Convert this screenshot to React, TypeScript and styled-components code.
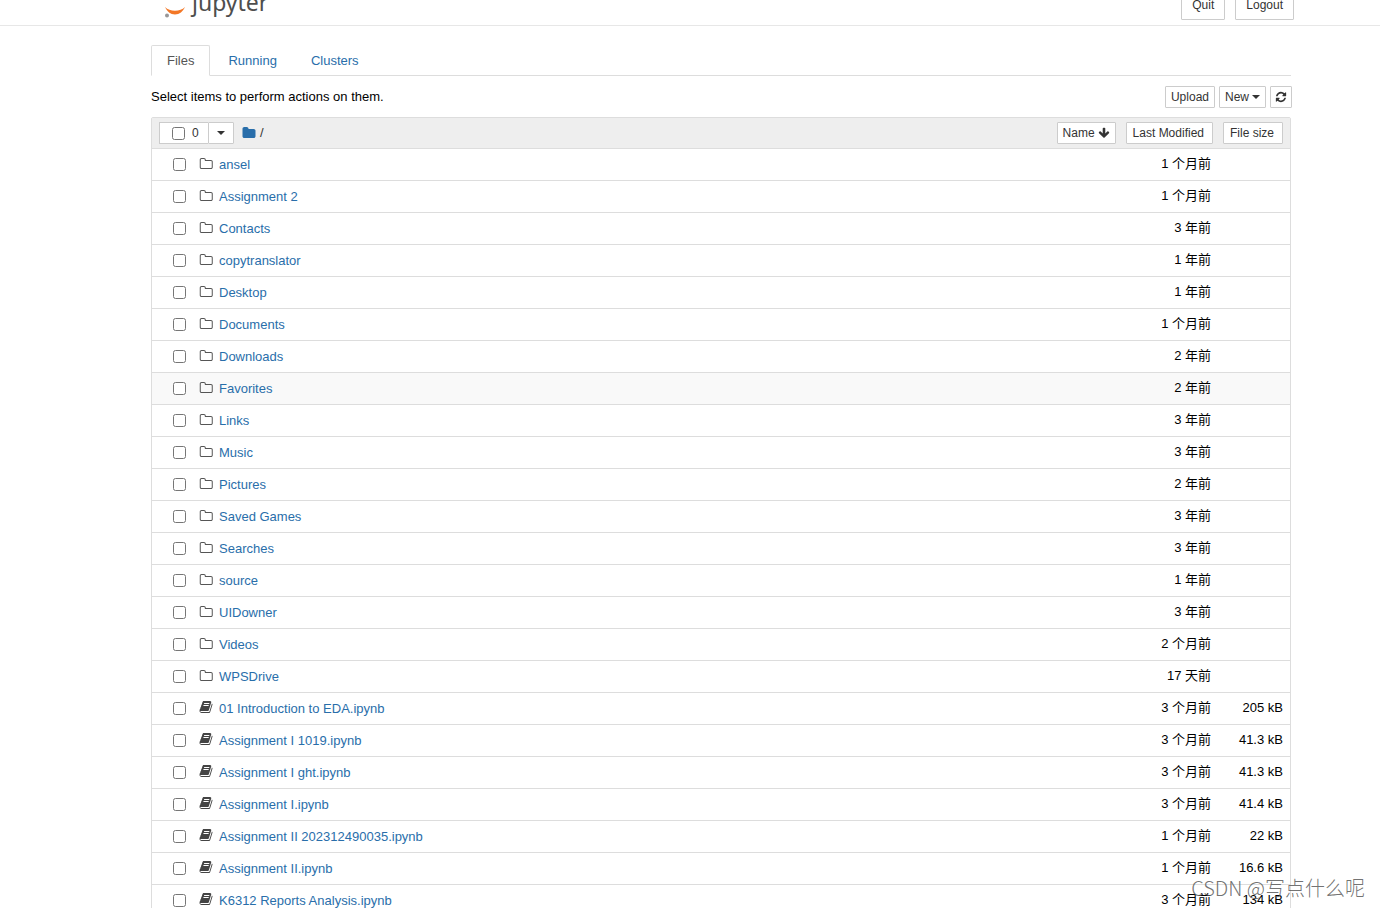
import React from "react";
import styled, { createGlobalStyle } from "styled-components";

const GlobalStyle = createGlobalStyle`
  *, *::before, *::after { box-sizing: border-box; }
  body {
    margin: 0;
    background: #fff;
    color: #000;
    font-family: "Liberation Sans", Arial, "Noto Sans CJK SC", sans-serif;
    font-size: 13px;
    line-height: 20px;
  }
  button, input { font-family: inherit; }
`;

const Page = styled.div`
  position: relative;
  height: 100vh;
  overflow: hidden;
`;

const Header = styled.header`
  display: flex;
  justify-content: space-between;
  align-items: flex-end;
  height: 26px;
  padding: 0 86px 5px 164px;
  overflow: hidden;
  border-bottom: 1px solid #e7e7e7;
`;

const Brand = styled.a`
  display: flex;
  align-items: flex-end;
  gap: 6px;
  color: #4e4e4e;
  text-decoration: none;
`;

const BrandName = styled.span`
  padding-bottom: 4px;
  font-family: "Noto Sans", sans-serif;
  font-size: 23px;
  line-height: 28px;
`;

const HeaderActions = styled.div`
  display: flex;
  gap: 10px;
`;

const Button = styled.button<{ $large?: boolean }>`
  display: inline-flex;
  align-items: center;
  gap: 3px;
  flex: none;
  height: ${(p) => (p.$large ? 30 : 22)}px;
  padding: 0 ${(p) => (p.$large ? 10 : 5)}px;
  border: 1px solid #ccc;
  border-radius: 1px;
  background: #fff;
  color: #333;
  font-size: 12px;
  line-height: 18px;
  white-space: nowrap;
`;

const IconButton = styled(Button)`
  justify-content: center;
  width: 22px;
  padding: 0;
`;

const MenuToggle = styled(Button)`
  padding: 0 8px;
`;

const SortButton = styled(Button)`
  padding: 0 8px 0 6px;
`;

const Main = styled.main`
  padding: 19px 89px 0 151px;
`;

const Tabs = styled.nav`
  display: flex;
  gap: 2px;
  height: 31px;
  border-bottom: 1px solid #ddd;
`;

const Tab = styled.a<{ $active?: boolean }>`
  height: 31px;
  padding: 5px 15px 0 15px;
  border: 1px solid ${(p) => (p.$active ? "#ddd" : "transparent")};
  border-bottom-color: ${(p) => (p.$active ? "#fff" : "transparent")};
  border-radius: 2px 2px 0 0;
  color: ${(p) => (p.$active ? "#555" : "#296eaa")};
  text-decoration: none;
`;

const Toolbar = styled.div`
  display: flex;
  align-items: center;
  justify-content: space-between;
  height: 41px;
`;

const ToolbarActions = styled.div`
  display: flex;
  gap: 4px;
  margin-right: -1px;
`;

const Listing = styled.section`
  border: 1px solid #ddd;
  border-radius: 2px;
`;

const ListHeader = styled.div`
  display: flex;
  align-items: center;
  height: 31px;
  padding: 0 7px;
  border-bottom: 1px solid #ddd;
  background: #eee;
`;

const SelectGroup = styled.div`
  display: flex;
  margin-right: 8px;
`;

const SelectAll = styled.label`
  display: flex;
  align-items: center;
  gap: 7px;
  width: 49px;
  height: 22px;
  padding-left: 12px;
  border: 1px solid #ccc;
  border-right: 0;
  background: #fff;
  color: #333;
  font-size: 12px;
`;

const Breadcrumb = styled.a`
  display: flex;
  align-items: center;
  gap: 4px;
  flex: 1;
  color: #296eaa;
  text-decoration: none;
`;

const Slash = styled.span`
  color: #333;
`;

const SortButtons = styled.div`
  display: flex;
  gap: 10px;
`;

const Check = styled.input`
  width: 13px;
  height: 13px;
  margin: 0;
`;

const Rows = styled.ul`
  margin: 0;
  padding: 0;
  list-style: none;
`;

const Row = styled.li<{ $hover?: boolean }>`
  display: flex;
  align-items: center;
  height: 32px;
  padding: 0 7px 0 21px;
  border-bottom: 1px solid #ddd;
  background: ${(p) => (p.$hover ? "#f9f9f9" : "#fff")};
`;

const RowIcon = styled.span<{ $notebook?: boolean }>`
  display: flex;
  width: 20px;
  height: ${(p) => (p.$notebook ? 17 : 15)}px;
  margin-left: 13px;
  color: ${(p) => (p.$notebook ? "#444" : "#555")};
`;

const ItemLink = styled.a`
  flex: 1;
  color: #296eaa;
  text-decoration: none;
`;

const Modified = styled.span`
  width: 80px;
  padding-bottom: 2px;
  text-align: right;
`;

const Size = styled.span`
  width: 72px;
  padding-bottom: 2px;
  text-align: right;
`;

const Watermark = styled.div`
  position: absolute;
  right: 15px;
  bottom: 6px;
  color: rgba(90, 90, 90, 0.85);
  font-family: "Noto Sans CJK SC", sans-serif;
  font-size: 20px;
  font-weight: 300;
  line-height: 28px;
  pointer-events: none;
`;

const PATHS = {
  folderOpen:
    "M1632 1312v-704q0-40-28-68t-68-28h-704q-40 0-68-28t-28-68v-64q0-40-28-68t-68-28h-320q-40 0-68 28t-28 68v960q0 40 28 68t68 28h1216q40 0 68-28t28-68zm128-704v704q0 92-66 158t-158 66h-1216q-92 0-158-66t-66-158v-960q0-92 66-158t158-66h320q92 0 158 66t66 158v32h672q92 0 158 66t66 158z",
  folder:
    "M1728 608v704q0 92-66 158t-158 66h-1216q-92 0-158-66t-66-158v-960q0-92 66-158t158-66h320q92 0 158 66t66 158v32h672q92 0 158 66t66 158z",
  book: "M1703 478q40 57 18 129l-275 906q-19 64-76.5 107.5t-122.5 43.5h-923q-77 0-148.5-53.5t-99.5-131.5q-24-67-2-127 0-4 3-27t4-37q1-8-3-21.5t-3-19.5q2-11 8-21t16.5-23.5 16.5-23.5q23-38 45-91.5t30-91.5q3-10 .5-30t-.5-28q3-11 17-28t17-23q21-36 42-92t25-90q1-9-2.5-32t.5-28q4-13 22-30.5t22-22.5q19-26 42.5-84.5t27.5-96.5q1-8-3-25.5t-2-26.5q2-8 9-18t18-23 17-21q8-12 16.5-30.5t15-35 16-36 19.5-32 26.5-23.5 36-11.5 47.5 5.5l-1 3q38-9 51-9h761q74 0 114 56t18 130l-274 906q-36 119-71.5 153.5t-128.5 34.5h-869q-27 0-38 15-11 16-1 43 24 70 144 70h923q29 0 56-15.5t35-41.5l300-987q7-22 5-57 38 15 59 43zm-1064 2q-4 13 2 22.5t20 9.5h608q13 0 25.5-9.5t16.5-22.5l21-64q4-13-2-22.5t-20-9.5h-608q-13 0-25.5 9.5t-16.5 22.5zm-83 256q-4 13 2 22.5t20 9.5h608q13 0 25.5-9.5t16.5-22.5l21-64q4-13-2-22.5t-20-9.5h-608q-13 0-25.5 9.5t-16.5 22.5z",
  refresh:
    "M1639 1056q0 5-1 7-64 268-268 434.5t-478 166.5q-146 0-282.5-55t-243.5-157l-129 129q-19 19-45 19t-45-19-19-45v-448q0-26 19-45t45-19h448q26 0 45 19t19 45-19 45l-137 137q71 66 161 102t187 36q134 0 250-65t186-179q11-17 53-117 8-23 30-23h192q13 0 22.5 9.5t9.5 22.5zm25-800v448q0 26-19 45t-45 19h-448q-26 0-45-19t-19-45 19-45l138-138q-148-137-349-137-134 0-250 65t-186 179q-11 17-53 117-8 23-30 23h-199q-13 0-22.5-9.5t-9.5-22.5v-7q65-268 270-434.5t480-166.5q146 0 284 55.5t245 156.5l130-129q19-19 45-19t45 19 19 45z",
  arrowDown:
    "M1675 832q0 53-37 90l-651 652q-39 37-91 37-53 0-90-37l-651-652q-38-36-38-90 0-53 38-91l74-75q39-37 91-37 53 0 90 37l294 294v-704q0-52 38-90t90-38h128q52 0 90 38t38 90v704l294-294q37-37 90-37 52 0 91 37l75 75q37 39 37 91z",
};

function Icon({ name, size = 14 }: { name: keyof typeof PATHS; size?: number }) {
  return (
    <svg width={size} height={size} viewBox="0 0 1792 1792" fill="currentColor" aria-hidden="true">
      <path d={PATHS[name]} />
    </svg>
  );
}

function Caret() {
  return (
    <svg width="8" height="4" viewBox="0 0 8 4" fill="currentColor" aria-hidden="true">
      <path d="M0 0h8l-4 4z" />
    </svg>
  );
}

function Logo() {
  return (
    <svg width="22" height="36" viewBox="0 0 22 36" aria-hidden="true">
      <path d="M1 23C3 27.500 6.500 30.500 11 30.500s8-3 10-7.500C18.500 25.600 15 26.800 11 26.800S3.500 25.600 1 23z" fill="#f37726" />
      <path d="M1 13C3 8.500 6.500 5.500 11 5.500s8 3 10 7.500C18.500 10.400 15 9.200 11 9.200S3.500 10.400 1 13z" fill="#f37726" />
      <circle cx="3" cy="31.500" r="2" fill="#989798" />
    </svg>
  );
}

type Item = { name: string; modified: string; size?: string; hover?: boolean };

const ITEMS: Item[] = [
  { name: "ansel", modified: "1 个月前" },
  { name: "Assignment 2", modified: "1 个月前" },
  { name: "Contacts", modified: "3 年前" },
  { name: "copytranslator", modified: "1 年前" },
  { name: "Desktop", modified: "1 年前" },
  { name: "Documents", modified: "1 个月前" },
  { name: "Downloads", modified: "2 年前" },
  { name: "Favorites", modified: "2 年前", hover: true },
  { name: "Links", modified: "3 年前" },
  { name: "Music", modified: "3 年前" },
  { name: "Pictures", modified: "2 年前" },
  { name: "Saved Games", modified: "3 年前" },
  { name: "Searches", modified: "3 年前" },
  { name: "source", modified: "1 年前" },
  { name: "UIDowner", modified: "3 年前" },
  { name: "Videos", modified: "2 个月前" },
  { name: "WPSDrive", modified: "17 天前" },
  { name: "01 Introduction to EDA.ipynb", modified: "3 个月前", size: "205 kB" },
  { name: "Assignment I 1019.ipynb", modified: "3 个月前", size: "41.3 kB" },
  { name: "Assignment I ght.ipynb", modified: "3 个月前", size: "41.3 kB" },
  { name: "Assignment I.ipynb", modified: "3 个月前", size: "41.4 kB" },
  { name: "Assignment II 202312490035.ipynb", modified: "1 个月前", size: "22 kB" },
  { name: "Assignment II.ipynb", modified: "1 个月前", size: "16.6 kB" },
  { name: "K6312 Reports Analysis.ipynb", modified: "3 个月前", size: "134 kB" },
];

export default function App() {
  return (
    <Page>
      <GlobalStyle />
      <Header>
        <Brand href="#">
          <Logo />
          <BrandName>jupyter</BrandName>
        </Brand>
        <HeaderActions>
          <Button $large>Quit</Button>
          <Button $large>Logout</Button>
        </HeaderActions>
      </Header>
      <Main>
        <Tabs>
          <Tab href="#files" $active>Files</Tab>
          <Tab href="#running">Running</Tab>
          <Tab href="#clusters">Clusters</Tab>
        </Tabs>
        <Toolbar>
          <span>Select items to perform actions on them.</span>
          <ToolbarActions>
            <Button>Upload</Button>
            <Button>New <Caret /></Button>
            <IconButton aria-label="Refresh"><Icon name="refresh" size={12} /></IconButton>
          </ToolbarActions>
        </Toolbar>
        <Listing>
          <ListHeader>
            <SelectGroup>
              <SelectAll>
                <Check type="checkbox" />
                <span>0</span>
              </SelectAll>
              <MenuToggle aria-label="Select by type"><Caret /></MenuToggle>
            </SelectGroup>
            <Breadcrumb href="#">
              <Icon name="folder" />
              <Slash>/</Slash>
            </Breadcrumb>
            <SortButtons>
              <Button>Name <Icon name="arrowDown" size={12} /></Button>
              <SortButton>Last Modified</SortButton>
              <SortButton>File size</SortButton>
            </SortButtons>
          </ListHeader>
          <Rows>
            {ITEMS.map((item) => (
              <Row key={item.name} $hover={item.hover}>
                <Check type="checkbox" aria-label={item.name} />
                <RowIcon $notebook={Boolean(item.size)}>
                  <Icon name={item.size ? "book" : "folderOpen"} />
                </RowIcon>
                <ItemLink href="#">{item.name}</ItemLink>
                <Modified>{item.modified}</Modified>
                <Size>{item.size}</Size>
              </Row>
            ))}
          </Rows>
        </Listing>
      </Main>
      <Watermark>CSDN @写点什么呢</Watermark>
    </Page>
  );
}
